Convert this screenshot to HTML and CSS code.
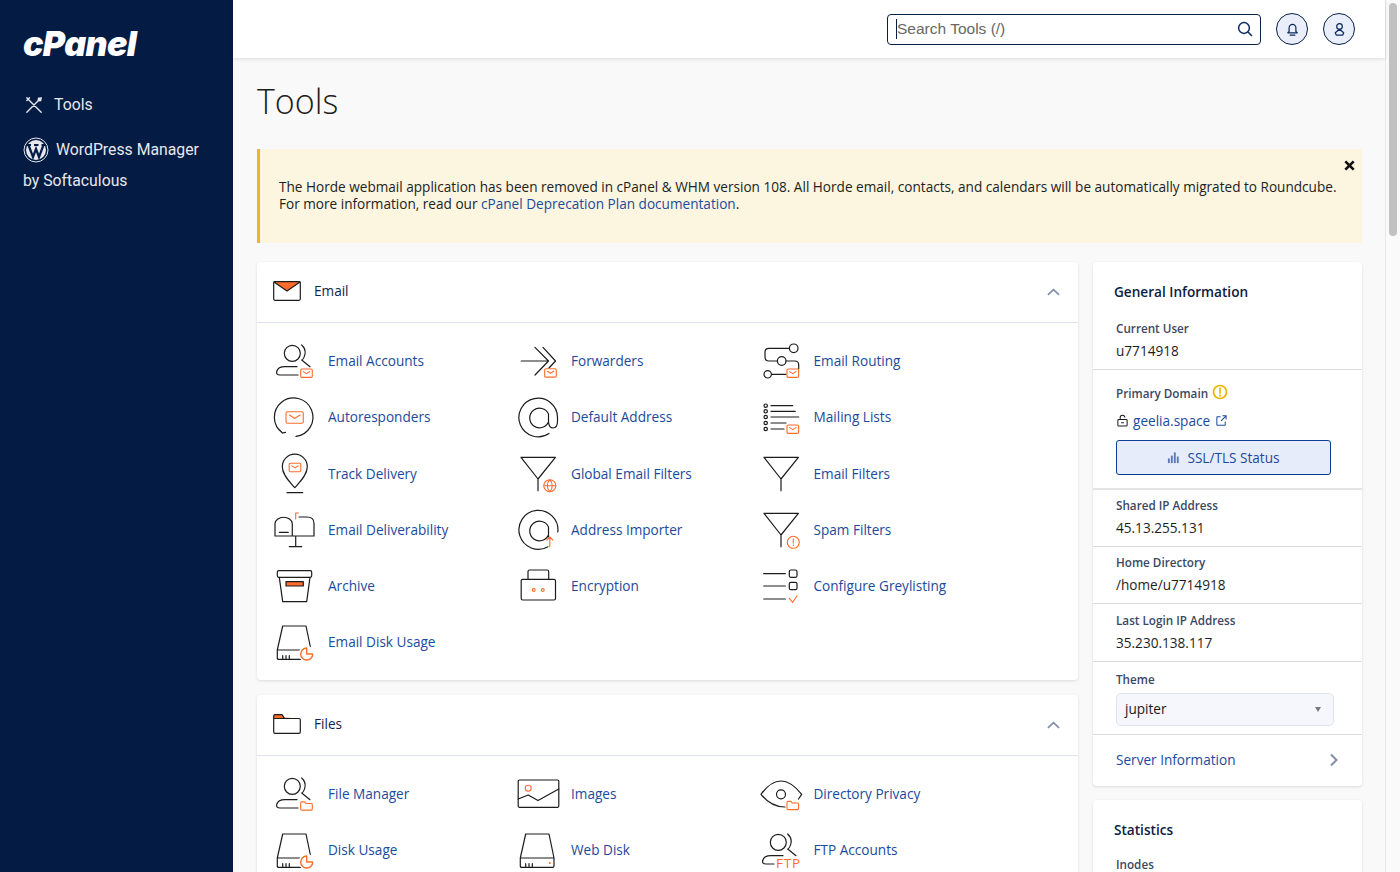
FILE: index.html
```html
<!DOCTYPE html>
<html lang="en">
<head>
<meta charset="utf-8">
<title>Tools - cPanel</title>
<link rel="stylesheet" href="styles.css">
</head>
<body>
<svg class="sprite" aria-hidden="true">
  <defs>
    <g id="env"><rect class="o" x="0" y="0" width="11.6" height="8.4" rx="1.2"/><path class="o" d="M2.6 2.6 5.8 4.6 9 2.6"/></g>
    <g id="fold"><path class="o" d="M0 1.4q0-1 1-1h3l1.2 1.6h5.4q1 0 1 1v4.6q0 1-1 1H1q-1 0-1-1z"/></g>
    <g id="person"><circle class="k" cx="19.3" cy="14.3" r="8"/><path class="k" d="M28.7 6Q33 10 32 15T28.7 21L37 27.7M25 36H7Q3 36 3.7 32.5 5 27.7 12 27.7H24"/></g>
    <g id="funnel"><path class="k" d="M5 5.3H39.4L22 27V38.7M5 5.3 22 27"/></g>
    <g id="disk"><path class="k" d="M9.7 6H33L38 30V38Q38 39.3 36.7 39.3H5.6Q4.3 39.3 4.3 38V30L9.7 6ZM4.3 30H38M9.7 35.7V39.3M13 35.7V39.3M16.3 35.7V39.3"/></g>
    <g id="pie"><circle class="mask" cx="33.7" cy="34" r="8"/><path class="o pie" d="M33.700 28A6 6 0 1 0 39.700 34H33.700Z"/></g>
  </defs>
</svg>
<div class="app">
  <nav class="sidebar">
    <div class="logo">cPanel</div>
    <a class="tools-link">
      <svg class="tools-icon" viewBox="0 0 20 20"><path d="M2 2 6 6M5 2 2 5M3.500 3.500 18 18M18 2 2 18M18 2 15 2.500 14.500 5.500 17.500 5z"/></svg>
      <span>Tools</span>
    </a>
    <div class="wp-row">
      <svg class="wp-icon" viewBox="0 0 26 26"><circle class="wp-ring" cx="13" cy="13" r="12"/><circle class="wp-disc" cx="13" cy="13" r="10"/><path class="wp-mark" d="M5.500 8 10 20 13 12 16 20 20.500 8M4 8H8M11 8H15.500M18.500 8H22"/></svg>
      <span>WordPress Manager</span>
    </div>
    <div class="wp-sub">by Softaculous</div>
  </nav>

  <div class="main">
    <header class="topbar">
      <div class="search">
        <span class="placeholder">Search Tools (/)</span>
        <svg class="search-icon" viewBox="0 0 16 16"><circle cx="7" cy="7" r="5.400"/><path d="M11 11 14.500 14.500"/></svg>
      </div>
      <span class="round-btn"><svg viewBox="0 0 16 16"><path d="M8 2.500A3.600 3.600 0 0 0 4.400 6.100V10L3 11.500H13L11.600 10V6.100A3.600 3.600 0 0 0 8 2.500ZM5.500 14H10.500"/></svg></span>
      <span class="round-btn"><svg viewBox="0 0 16 16"><circle cx="8" cy="4.800" r="3"/><path d="M8 7.800 3.500 11.500 4.500 14H11.500L12.500 11.500Z"/></svg></span>
    </header>

    <main class="content">
      <h1 class="page-title">Tools</h1>

      <div class="notice">
        <svg class="notice-close" viewBox="0 0 10 10"><path d="M1.200 1.200 8.800 8.800M8.800 1.200 1.200 8.800"/></svg>
        <p>The Horde webmail application has been removed in cPanel &amp; WHM version 108. All Horde email, contacts, and calendars will be automatically migrated to Roundcube.<br>For more information, read our <a class="link">cPanel Deprecation Plan documentation</a>.</p>
      </div>

      <div class="columns">
        <div class="tools-col">
          <section class="card">
            <div class="card-head">
              <svg class="head-icon" viewBox="0 0 28 20"><path class="head-fill" d="M1 1H27L14 10Z"/><rect class="k" x="0.700" y="0.700" width="26.600" height="18.600" rx="1.200"/><path class="k" d="M1 1 14 10 27 1"/></svg>
              <span class="head-title">Email</span>
              <svg class="chevron" viewBox="0 0 14 8"><path d="M1 7 7 1.500 13 7"/></svg>
            </div>
            <div class="tool-grid">
              <a class="tool"><svg class="ti" viewBox="0 0 44 44"><use href="#person"/><use href="#env" x="27.700" y="30"/></svg><span>Email Accounts</span></a>
              <a class="tool"><svg class="ti" viewBox="0 0 44 44"><path class="k" d="M5.200 22H32.500M19 8.300 32.500 22 19 36M27 8.300 39.500 22 33 29"/><use href="#env" x="28.700" y="29.700"/></svg><span>Forwarders</span></a>
              <a class="tool"><svg class="ti" viewBox="0 0 44 44"><path class="k" d="M30.300 9.300H10Q6 9.300 6 13V18Q6 22 10 22H18.400M27 22H36Q39.700 22 39.700 26V30M13 35.300H27"/><circle class="k" cx="34.700" cy="9.300" r="4.300"/><circle class="k" cx="22.700" cy="22" r="4.300"/><circle class="k" cx="8.700" cy="35.300" r="3.700"/><use href="#env" x="28" y="30"/></svg><span>Email Routing</span></a>

              <a class="tool"><svg class="ti" viewBox="0 0 44 44"><path class="k" d="M23 41.400A19.300 19.300 0 1 0 9.500 38M5.500 34 9.500 38 12.500 37.300"/><rect class="o" x="13" y="16.700" width="17.300" height="11.600" rx="1.500"/><path class="o" d="M16.500 20 21.700 23.500 27 20"/></svg><span>Autoresponders</span></a>
              <a class="tool"><svg class="ti" viewBox="0 0 44 44"><path class="k" d="M32.500 28V19A9.800 9.800 0 1 0 32.500 27Q33 33 37 33 41.500 33 41.500 26V22.300A19.300 19.300 0 1 0 33 38.500"/></svg><span>Default Address</span></a>
              <a class="tool"><svg class="ti" viewBox="0 0 44 44"><path class="k" d="M12 10.700H33.700M12 16.300H36.300M12 22H39.700M12 28H27M12 34H25"/><circle class="k" cx="6.700" cy="10.700" r="1.700"/><circle class="k" cx="6.700" cy="16.300" r="1.700"/><circle class="k" cx="6.700" cy="22" r="1.700"/><circle class="k" cx="6.700" cy="28" r="1.700"/><circle class="k" cx="6.700" cy="34" r="1.700"/><use href="#env" x="28" y="30"/></svg><span>Mailing Lists</span></a>

              <a class="tool"><svg class="ti" viewBox="0 0 44 44"><path class="k" d="M21.800 35.700C17 30 9.300 23 9.300 14.700A12.500 12.500 0 0 1 34.300 14.700C34.300 23 26.600 30 21.800 35.700ZM14 40.700H29.700"/><use href="#env" x="16.200" y="11.300"/></svg><span>Track Delivery</span></a>
              <a class="tool"><svg class="ti" viewBox="0 0 44 44"><use href="#funnel"/><circle class="o" cx="33.800" cy="33.700" r="6"/><path class="o" d="M27.800 33.700H39.800M33.800 27.700C30.500 31 30.500 36.500 33.800 39.700 37 36.500 37 31 33.800 27.700Z"/></svg><span>Global Email Filters</span></a>
              <a class="tool"><svg class="ti" viewBox="0 0 44 44"><use href="#funnel"/></svg><span>Email Filters</span></a>

              <a class="tool"><svg class="ti" viewBox="0 0 44 44"><path class="k" d="M2 28V15.500A8.700 7 0 0 1 19.300 15.500V28M2 28H41V15.500Q41 9 34 9H26M6.300 24.300H15.300M22.700 28V38.700M16.300 38.700H28.700"/><path class="o" d="M22.700 11V5H25.500"/></svg><span>Email Deliverability</span></a>
              <a class="tool"><svg class="ti" viewBox="0 0 44 44"><path class="k" d="M32.500 19A9.800 9.800 0 1 0 32.500 27M32.500 19V29M41.800 24A19.500 19.500 0 1 0 32 38.800"/><path class="o" d="M33.800 38.700V29M30.800 32 33.800 29 36.800 32"/></svg><span>Address Importer</span></a>
              <a class="tool"><svg class="ti" viewBox="0 0 44 44"><use href="#funnel"/><circle class="o" cx="34.300" cy="34.300" r="6"/><path class="o" d="M34.300 30.800V35M34.300 36.800V37.800"/></svg><span>Spam Filters</span></a>

              <a class="tool"><svg class="ti" viewBox="0 0 44 44"><rect class="k" x="4.300" y="6.700" width="34.400" height="6.600" rx="1.500"/><path class="k" d="M6.300 13.300 9.700 37.700H33.700L37 13.300"/><rect class="head-fill k" x="13" y="17.700" width="17.300" height="4.300"/></svg><span>Archive</span></a>
              <a class="tool"><svg class="ti" viewBox="0 0 44 44"><rect class="k" x="5.200" y="15.300" width="34.300" height="20.700" rx="1.500"/><path class="k" d="M12 15.300V7.500Q12 6 13.500 6H31.200Q32.700 6 32.700 7.500V15.300"/><circle class="o" cx="17.800" cy="26" r="1.400"/><circle class="o" cx="26.800" cy="26" r="1.400"/></svg><span>Encryption</span></a>
              <a class="tool"><svg class="ti" viewBox="0 0 44 44"><path class="k" d="M4.700 9.700H26.300M4.700 22H26.300M4.700 35H26.300"/><rect class="k" x="30.300" y="6" width="7.700" height="7.300" rx="1.500"/><rect class="k" x="30.300" y="18.300" width="7.700" height="7.400" rx="1.500"/><path class="o" d="M30.300 34.300 33.700 38.300 38 31.700"/></svg><span>Configure Greylisting</span></a>

              <a class="tool"><svg class="ti" viewBox="0 0 44 44"><use href="#disk"/><use href="#pie"/></svg><span>Email Disk Usage</span></a>
            </div>
          </section>

          <section class="card">
            <div class="card-head">
              <svg class="head-icon" viewBox="0 0 28 20"><path class="head-fill" d="M1 4.500V1.500Q1 0.700 2 0.700H9L11.500 3.500 27 4.500Z"/><path class="k" d="M0.700 2Q0.700 0.700 2 0.700H9L11.500 4.500H26Q27.300 4.500 27.300 5.800V18Q27.300 19.300 26 19.300H2Q0.700 19.300 0.700 18ZM0.700 4.500H11.500"/></svg>
              <span class="head-title">Files</span>
              <svg class="chevron" viewBox="0 0 14 8"><path d="M1 7 7 1.500 13 7"/></svg>
            </div>
            <div class="tool-grid">
              <a class="tool"><svg class="ti" viewBox="0 0 44 44"><use href="#person"/><use href="#fold" x="27.700" y="29.500"/></svg><span>File Manager</span></a>
              <a class="tool"><svg class="ti" viewBox="0 0 44 44"><rect class="k" x="2.200" y="8" width="40.600" height="27.300" rx="1.200"/><circle class="o" cx="12.200" cy="16.300" r="3"/><path class="k" d="M2.200 27 12.200 23 22 28.600 42.800 17"/></svg><span>Images</span></a>
              <a class="tool"><svg class="ti" viewBox="0 0 44 44"><path class="k" d="M39.500 27 42.700 22.300C36 14 29 9 22 9S8 14 2 22.300C8 30 15 35 26 35"/><circle class="k" cx="22" cy="22.300" r="4.500"/><use href="#fold" x="28" y="29"/></svg><span>Directory Privacy</span></a>

              <a class="tool"><svg class="ti" viewBox="0 0 44 44"><use href="#disk"/><use href="#pie"/></svg><span>Disk Usage</span></a>
              <a class="tool"><svg class="ti" viewBox="0 0 44 44"><use href="#disk"/><circle class="dot" cx="33.800" cy="35" r="1"/></svg><span>Web Disk</span></a>
              <a class="tool"><svg class="ti" viewBox="0 0 44 44"><circle class="k" cx="19.300" cy="14.300" r="8"/><path class="k" d="M28.700 6Q33 10 32 15T28.700 21L37 27.700M15 36H7Q3 36 3.700 32.500 5 27.700 12 27.700H24"/><text class="ftp" x="17" y="40">FTP</text></svg><span>FTP Accounts</span></a>
            </div>
          </section>
        </div>

        <aside class="info-col">
          <section class="card info-card">
            <div class="info-sec first">
              <h2 class="info-title">General Information</h2>
              <div class="info-label">Current User</div>
              <div class="info-value">u7714918</div>
            </div>
            <div class="info-sec domain">
              <div class="info-label">Primary Domain <svg class="warn" viewBox="0 0 16 16"><circle cx="8" cy="8" r="6.500"/><path d="M8 4.200V9M8 11V12"/></svg></div>
              <div class="domain-row">
                <svg class="lock" viewBox="0 0 14 14"><rect x="2" y="6" width="10" height="7" rx="1"/><path d="M4.500 6V3.800A2.500 2.500 0 0 1 9.500 3.800M5.500 9.500H8.500"/></svg>
                <a class="link">geelia.space</a>
                <svg class="ext" viewBox="0 0 14 14"><path d="M6 3H2.500Q2 3 2 3.500V11.500Q2 12 2.500 12H10.500Q11 12 11 11.500V8M8 2H12V6M12 2 6.500 7.500"/></svg>
              </div>
              <a class="ssl-btn"><svg class="bars" viewBox="0 0 14 14"><rect x="1" y="8" width="2" height="5"/><rect x="4.200" y="5" width="2" height="8"/><rect x="7.400" y="1.500" width="2" height="11.500"/><rect x="10.600" y="6" width="2" height="7"/></svg>SSL/TLS Status</a>
            </div>
            <div class="info-sec">
              <div class="info-label">Shared IP Address</div>
              <div class="info-value">45.13.255.131</div>
            </div>
            <div class="info-sec">
              <div class="info-label">Home Directory</div>
              <div class="info-value">/home/u7714918</div>
            </div>
            <div class="info-sec login">
              <div class="info-label">Last Login IP Address</div>
              <div class="info-value">35.230.138.117</div>
            </div>
            <div class="info-sec theme">
              <div class="info-label">Theme</div>
              <div class="select"><span>jupiter</span><i class="select-arrow"></i></div>
            </div>
            <a class="server-row"><span class="link">Server Information</span><svg class="server-chevron" viewBox="0 0 10 14"><path d="M2 1.500 7.500 7 2 12.500"/></svg></a>
          </section>

          <section class="card stats-card">
            <h2 class="info-title">Statistics</h2>
            <div class="info-label">Inodes</div>
          </section>
        </aside>
      </div>
    </main>
  </div>

  <div class="scrollbar"><div class="scroll-thumb"></div></div>
</div>
</body>
</html>
```
FILE: styles.css
```css
* { box-sizing: border-box; }
html, body { margin: 0; height: 100%; overflow: hidden; }
body { font-family: "Open Sans", "Liberation Sans", sans-serif; font-size: 13.6px; color: #1e1e1e; background: #f9f9f9; }
a { text-decoration: none; }
p { margin: 0; }

.sprite { display: block; width: 0; height: 0; }
.k { fill: none; stroke: #1c1c1c; stroke-width: 1.2; stroke-linecap: round; stroke-linejoin: round; }
.o { fill: none; stroke: #ff6c2c; stroke-width: 1.100; stroke-linecap: round; stroke-linejoin: round; }
.pie { stroke-width: 1.400; }
.mask { fill: #fff; }
.head-fill { fill: #ff6c2c; }
rect.head-fill.k { fill: #ff6c2c; }
.dot { fill: #ff6c2c; }
.ftp { fill: #ff6c2c; font-family: "Open Sans", sans-serif; font-size: 13.500px; letter-spacing: .8px; }

.app { display: flex; height: 872px; overflow: hidden; }

.sidebar { flex: 0 0 233px; background: #041b44; color: #e6e8ee; font-family: Roboto, sans-serif; font-size: 15.800px; padding: 26px 0 0 23px; }
.logo { font-family: Inter, sans-serif; font-weight: 900; font-style: italic; font-size: 34px; line-height: 36px; letter-spacing: -.6px; color: #fff; margin-bottom: 27px; }
.tools-link { display: flex; align-items: center; gap: 11px; height: 31px; margin-bottom: 14px; padding-left: 2px; color: #e6e8ee; }
.tools-icon { width: 18px; height: 18px; fill: none; stroke: #e6e8ee; stroke-width: 1.500; stroke-linecap: round; stroke-linejoin: round; }
.wp-row { display: flex; align-items: center; gap: 7px; height: 31px; }
.wp-icon { width: 26px; height: 26px; flex: none; margin-left: 0; }
.wp-ring { fill: none; stroke: #e6e8ee; stroke-width: 1; }
.wp-disc { fill: #e6e8ee; }
.wp-mark { fill: none; stroke: #041b44; stroke-width: 2.200; }
.wp-sub { line-height: 31px; }

.main { flex: 1 1 auto; min-width: 0; display: flex; flex-direction: column; }
.topbar { flex: 0 0 58px; background: #fff; box-shadow: 0 1px 4px rgba(0, 0, 0, .12); display: flex; align-items: center; padding: 0 30px 0 654px; position: relative; }
.search { flex: 0 0 374px; height: 31px; border: 1px solid #0a1f44; border-radius: 4px; display: flex; align-items: center; justify-content: space-between; padding: 0 7px 0 8px; background: #fff; }
.placeholder { font-family: "Liberation Sans", sans-serif; font-size: 15.500px; color: #676767; border-left: 1px solid #0a1f44; line-height: 20px; }
.search-icon { width: 16px; height: 16px; fill: none; stroke: #0a2a5c; stroke-width: 1.500; stroke-linecap: round; }
.round-btn { flex: 0 0 32px; height: 32px; margin-left: 15px; border-radius: 50%; border: 1px solid #0a1f44; background: #eaeefb; display: flex; align-items: center; justify-content: center; }
.round-btn svg { width: 15px; height: 15px; fill: none; stroke: #0a2a5c; stroke-width: 1.300; stroke-linejoin: round; stroke-linecap: round; }

.content { flex: 1 1 auto; padding: 19px 23px 0 24px; min-height: 0; }
.page-title { margin: 0 0 24px; font-weight: 300; font-size: 34px; line-height: 48px; color: #1d1d1d; }

.notice { position: relative; height: 94px; margin-bottom: 19px; padding: 29px 10px 0 19px; background: #fcf6e1; border-left: 3px solid #f0b429; line-height: 17px; color: #222; }
.notice-close { position: absolute; top: 11px; right: 7px; width: 11px; height: 11px; fill: none; stroke: #111; stroke-width: 2.400; }
.link { color: #1c4a9c; }

.columns { display: flex; gap: 15px; align-items: flex-start; }
.tools-col { flex: 0 0 821px; display: flex; flex-direction: column; gap: 15px; }
.info-col { flex: 0 0 269px; display: flex; flex-direction: column; gap: 14px; }

.card { background: #fff; border-radius: 4px; box-shadow: 0 1px 3px rgba(0, 0, 0, .12); }
.card-head { height: 61px; padding: 0 18px 2px 16px; border-bottom: 1px solid #dfe3ef; display: flex; align-items: center; gap: 13px; }
.head-icon { width: 28px; height: 20px; flex: none; }
.head-title { flex: 1; color: #10244a; padding-bottom: 2px; }
.chevron { width: 13px; height: 8px; margin-top: 2px; fill: none; stroke: #7f8da8; stroke-width: 1.800; }

.tool-grid { display: grid; grid-template-columns: 243px 242.500px 242px; grid-auto-rows: 56.250px; padding: 10px 0 9.500px 16px; }
.tool { display: flex; align-items: center; gap: 11px; color: #1c4a9c; }
.tool span { padding-bottom: 1px; }
.ti { width: 44px; height: 44px; flex: none; }

.info-sec { padding: 6px 0 8px 23px; border-bottom: 1px solid #dcdcdc; }
.info-sec.first { padding-top: 0; }
.info-title { margin: 0 0 17px -2px; padding-top: 20px; font-size: 13.600px; font-weight: 600; line-height: 20px; color: #0c2040; }
.info-label { font-size: 11.700px; font-weight: 600; line-height: 18px; color: #3b4863; margin-bottom: 4px; }
.info-value { line-height: 20px; color: #1e1e1e; }
.domain { padding-top: 14px; padding-bottom: 13px; border-bottom: 2px solid #e4e4e4; padding-right: 31px; }
.domain .info-label { margin-bottom: 9px; }
.warn { width: 16px; height: 16px; vertical-align: -2px; margin-left: 1px; fill: none; stroke: #f0b400; stroke-width: 1.700; stroke-linecap: round; }
.domain-row { display: flex; align-items: center; height: 18px; margin-bottom: 11px; gap: 4px; }
.lock { width: 13px; height: 13px; fill: none; stroke: #1c1c1c; stroke-width: 1.100; }
.ext { width: 13px; height: 13px; fill: none; stroke: #1c4a9c; stroke-width: 1.100; margin-left: 1px; }
.ssl-btn { display: flex; align-items: center; justify-content: center; gap: 7px; height: 35px; border: 1px solid #0b3d91; border-radius: 3px; background: #e6ecfa; color: #1c4a9c; }
.bars { width: 13px; height: 13px; fill: #5a78b5; }
.login { padding-top: 7px; }
.theme { padding-top: 8px; padding-right: 28px; }
.theme .info-label { margin-bottom: 5px; }
.select { height: 33px; border: 1px solid #dfe3ee; border-radius: 5px; background: #f6f7fc; display: flex; align-items: center; justify-content: space-between; padding: 0 12px 3px 8px; color: #1a1a1a; }
.select-arrow { width: 0; height: 0; margin-top: 3px; border-left: 3.500px solid transparent; border-right: 3.500px solid transparent; border-top: 5px solid #7a7a7a; }
.server-row { height: 51px; padding: 0 23px 2px; display: flex; align-items: center; justify-content: space-between; }
.server-chevron { width: 10px; height: 14px; margin-top: 1px; fill: none; stroke: #7f8da8; stroke-width: 2; }
.stats-card { padding-left: 23px; height: 120px; }
.stats-card .info-title { margin-bottom: 15px; }

.scrollbar { flex: 0 0 15px; background: #fafafa; border-left: 1px solid #e8e8e8; padding: 3px 3px 0 3px; }
.scroll-thumb { height: 233px; background: #c1c1c1; border-radius: 4px; }
```
